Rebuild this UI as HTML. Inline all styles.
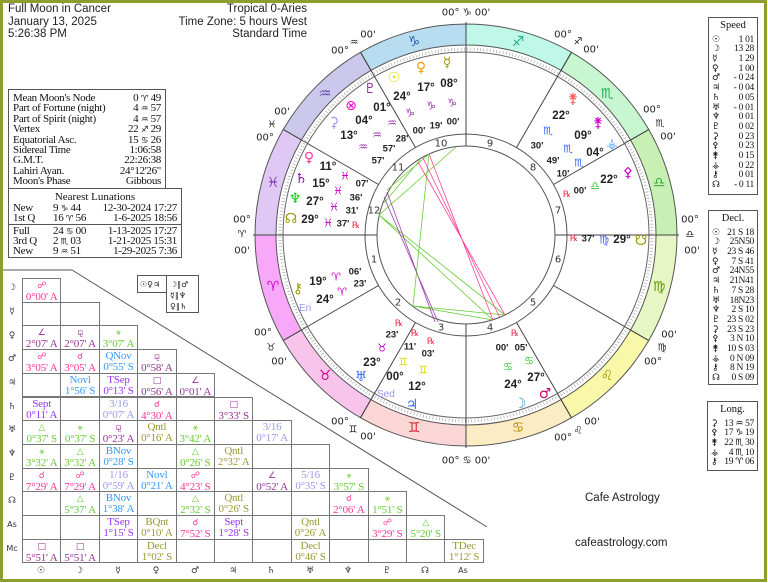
<!DOCTYPE html>
<html><head><meta charset="utf-8"><style>
*{margin:0;padding:0;box-sizing:border-box}
body{width:768px;height:583px;position:relative;background:#fff;font-family:"Liberation Sans","DejaVu Sans",sans-serif;overflow:hidden}
.frame{position:absolute;left:0;top:0;width:767px;height:582px;border:3px solid #8e9c30}
.t{position:absolute;font-size:11.5px;line-height:12.5px;color:#222;white-space:nowrap}
.box{position:absolute;border:1px solid #555;background:#fff;font-family:"Liberation Serif","DejaVu Serif",serif;font-size:11px;line-height:10px;color:#111;overflow:hidden}
.row{display:flex;justify-content:space-between;letter-spacing:-0.3px;white-space:nowrap;height:10.4px;overflow:visible}
.lun .row{height:9.9px}
.z{font-family:"DejaVu Sans",sans-serif;font-size:8.5px;color:#111;line-height:1}
.sbox{position:absolute;border:1px solid #555;font-family:"Liberation Serif","DejaVu Serif",serif;font-size:9.5px;line-height:9.7px;color:#111;padding:3px 3px;white-space:nowrap;letter-spacing:-0.3px}
.sbox .h{text-align:center;margin-bottom:5px;font-size:10.5px;letter-spacing:0}
.sbox .r{display:flex;justify-content:space-between;height:9.7px}
.sbox .r span:first-child{font-family:"DejaVu Sans",sans-serif;font-size:9px;line-height:1}
.cell{position:absolute;width:39.4px;height:24.7px;border:1px solid #777;font-family:"Liberation Serif","DejaVu Serif",serif;font-size:11px;line-height:11px;text-align:center;padding-top:1px;white-space:nowrap;letter-spacing:-0.2px}
.cell i{font-style:normal;font-family:"DejaVu Sans",sans-serif;font-size:9px}
.p{color:#ff3399}.u{color:#993399}.g{color:#66cc33}.b{color:#3399ff}.v{color:#9933ff}.l{color:#9999ee}.o{color:#999933}
.lab{position:absolute;font-family:"DejaVu Sans",sans-serif;font-size:9px;color:#333;width:16px;text-align:center}
</style></head><body>
<div class="frame"></div>
<div class="t" style="left:8px;top:3px">Full Moon in Cancer<br>January 13, 2025<br>5:26:38 PM</div>
<div class="t" style="left:150px;top:3px;width:157px;text-align:right">Tropical 0-Aries<br>Time Zone: 5 hours West<br>Standard Time</div>

<div class="box" style="left:8px;top:89px;width:158px;height:100px;padding:3px 4px 0 4px">
<div class="row"><span>Mean Moon's Node</span><span>0 <span class="z">♈︎</span> 49</span></div>
<div class="row"><span>Part of Fortune (night)</span><span>4 <span class="z">♒︎</span> 57</span></div>
<div class="row"><span>Part of Spirit (night)</span><span>4 <span class="z">♒︎</span> 57</span></div>
<div class="row"><span>Vertex</span><span>22 <span class="z">♐︎</span> 29</span></div>
<div class="row"><span>Equatorial Asc.</span><span>15 <span class="z">♋︎</span> 26</span></div>
<div class="row"><span>Sidereal Time</span><span>1:06:58</span></div>
<div class="row"><span>G.M.T.</span><span>22:26:38</span></div>
<div class="row"><span>Lahiri Ayan.</span><span>24°12'26"</span></div>
<div class="row"><span>Moon's Phase</span><span>Gibbous</span></div>
</div>
<div class="box lun" style="left:8px;top:188px;width:174px;height:70px;padding:3px 4px 0 4px">
<div style="text-align:center;height:11px">Nearest Lunations</div>
<div class="row"><span style="width:40px">New</span><span style="width:40px">9 <span class="z">♑︎</span> 44</span><span style="flex:1;text-align:right">12-30-2024 17:27</span></div>
<div class="row"><span style="width:40px">1st Q</span><span style="width:40px">16 <span class="z">♈︎</span> 56</span><span style="flex:1;text-align:right">1-6-2025 18:56</span></div>
<div style="border-top:1px solid #555;margin:1px -4px 1px -4px;height:0"></div>
<div class="row"><span style="width:40px">Full</span><span style="width:40px">24 <span class="z">♋︎</span> 00</span><span style="flex:1;text-align:right">1-13-2025 17:27</span></div>
<div class="row"><span style="width:40px">3rd Q</span><span style="width:40px">2 <span class="z">♏︎</span> 03</span><span style="flex:1;text-align:right">1-21-2025 15:31</span></div>
<div class="row"><span style="width:40px">New</span><span style="width:40px">9 <span class="z">♒︎</span> 51</span><span style="flex:1;text-align:right">1-29-2025 7:36</span></div>
</div>

<div class="sbox" style="left:708px;top:17px;width:50px;height:178px">
<div class="h">Speed</div>
<div class="r"><span>☉</span><span>1 01</span></div><div class="r"><span>☽</span><span>13 28</span></div><div class="r"><span>☿</span><span>1 29</span></div><div class="r"><span>♀</span><span>1 00</span></div><div class="r"><span>♂</span><span>- 0 24</span></div><div class="r"><span>♃</span><span>- 0 04</span></div><div class="r"><span>♄</span><span>0 05</span></div><div class="r"><span>♅</span><span>- 0 01</span></div><div class="r"><span>♆</span><span>0 01</span></div><div class="r"><span>♇</span><span>0 02</span></div><div class="r"><span>⚳</span><span>0 23</span></div><div class="r"><span>⚴</span><span>0 23</span></div><div class="r"><span>⚵</span><span>0 15</span></div><div class="r"><span>⚶</span><span>0 22</span></div><div class="r"><span>⚷</span><span>0 01</span></div><div class="r"><span>☊</span><span>- 0 11</span></div>
</div>
<div class="sbox" style="left:708px;top:210px;width:50px;height:175px">
<div class="h">Decl.</div>
<div class="r"><span>☉</span><span>21 S 18</span></div><div class="r"><span>☽</span><span>25N50</span></div><div class="r"><span>☿</span><span>23 S 46</span></div><div class="r"><span>♀</span><span>7 S 41</span></div><div class="r"><span>♂</span><span>24N55</span></div><div class="r"><span>♃</span><span>21N41</span></div><div class="r"><span>♄</span><span>7 S 28</span></div><div class="r"><span>♅</span><span>18N23</span></div><div class="r"><span>♆</span><span>2 S 10</span></div><div class="r"><span>♇</span><span>23 S 02</span></div><div class="r"><span>⚳</span><span>23 S 23</span></div><div class="r"><span>⚴</span><span>3 N 10</span></div><div class="r"><span>⚵</span><span>10 S 03</span></div><div class="r"><span>⚶</span><span>0 N 09</span></div><div class="r"><span>⚷</span><span>8 N 19</span></div><div class="r"><span>☊</span><span>0 S 09</span></div>
</div>
<div class="sbox" style="left:707px;top:401px;width:51px;height:70px">
<div class="h">Long.</div>
<div class="r"><span>⚳</span><span>13 <span class="z">♒︎</span> 57</span></div><div class="r"><span>⚴</span><span>17 <span class="z">♑︎</span> 19</span></div><div class="r"><span>⚵</span><span>22 <span class="z">♏︎</span> 30</span></div><div class="r"><span>⚶</span><span>4 <span class="z">♏︎</span> 10</span></div><div class="r"><span>⚷</span><span>19 <span class="z">♈︎</span> 06</span></div>
</div>

<div class="t" style="left:585px;top:492px">Cafe Astrology</div>
<div class="t" style="left:575px;top:537px">cafeastrology.com</div>

<svg width="768" height="583" style="position:absolute;left:0;top:0" font-family="DejaVu Sans, sans-serif">
<line x1="3" y1="270" x2="72" y2="270" stroke="#555"/>
<line x1="72" y1="270" x2="487" y2="527" stroke="#555"/>
<g stroke="#555" stroke-width="1">
<path d="M255,235 A211,211 0 0 0 283.27,340.5 L301.46,330 A190,190 0 0 1 276,235 Z" fill="#f8a8f8"/>
<path d="M255,235 A211,211 0 0 0 283.27,340.5 L301.46,330 A190,190 0 0 1 276,235 Z" fill="#f8c4ec" transform="rotate(-30 466 235)"/>
<path d="M255,235 A211,211 0 0 0 283.27,340.5 L301.46,330 A190,190 0 0 1 276,235 Z" fill="#fbd6d6" transform="rotate(-60 466 235)"/>
<path d="M255,235 A211,211 0 0 0 283.27,340.5 L301.46,330 A190,190 0 0 1 276,235 Z" fill="#fcecc4" transform="rotate(-90 466 235)"/>
<path d="M255,235 A211,211 0 0 0 283.27,340.5 L301.46,330 A190,190 0 0 1 276,235 Z" fill="#f8f8a8" transform="rotate(-120 466 235)"/>
<path d="M255,235 A211,211 0 0 0 283.27,340.5 L301.46,330 A190,190 0 0 1 276,235 Z" fill="#e6f6c4" transform="rotate(-150 466 235)"/>
<path d="M255,235 A211,211 0 0 0 283.27,340.5 L301.46,330 A190,190 0 0 1 276,235 Z" fill="#c8f0b4" transform="rotate(-180 466 235)"/>
<path d="M255,235 A211,211 0 0 0 283.27,340.5 L301.46,330 A190,190 0 0 1 276,235 Z" fill="#c8f6d0" transform="rotate(-210 466 235)"/>
<path d="M255,235 A211,211 0 0 0 283.27,340.5 L301.46,330 A190,190 0 0 1 276,235 Z" fill="#c0f8e8" transform="rotate(-240 466 235)"/>
<path d="M255,235 A211,211 0 0 0 283.27,340.5 L301.46,330 A190,190 0 0 1 276,235 Z" fill="#b8dcf0" transform="rotate(-270 466 235)"/>
<path d="M255,235 A211,211 0 0 0 283.27,340.5 L301.46,330 A190,190 0 0 1 276,235 Z" fill="#ccc8ec" transform="rotate(-300 466 235)"/>
<path d="M255,235 A211,211 0 0 0 283.27,340.5 L301.46,330 A190,190 0 0 1 276,235 Z" fill="#e0c8f4" transform="rotate(-330 466 235)"/>
</g>
<circle cx="466" cy="235" r="183" fill="none" stroke="#666"/>
<circle cx="466" cy="235" r="186" fill="none" stroke="#888" stroke-width="3" stroke-dasharray="0.5 2.75"/>
<circle cx="466" cy="235" r="101" fill="none" stroke="#555"/>
<circle cx="466" cy="235" r="89" fill="none" stroke="#555"/>
<g stroke="#444">
<line x1="377" y1="235" x2="253" y2="235"/><line x1="555" y1="235" x2="679" y2="235"/>
<line x1="466" y1="146" x2="466" y2="22"/><line x1="466" y1="324" x2="466" y2="448"/>
<line x1="378.5" y1="285.5" x2="283.3" y2="340.5"/><line x1="415.5" y1="322.5" x2="360.5" y2="417.7"/>
<line x1="516.5" y1="322.5" x2="571.5" y2="417.7"/><line x1="553.5" y1="285.5" x2="648.7" y2="340.5"/>
<line x1="553.5" y1="184.5" x2="648.7" y2="129.5"/><line x1="516.5" y1="147.5" x2="571.5" y2="52.3"/>
<line x1="415.5" y1="147.5" x2="360.5" y2="52.3"/><line x1="378.5" y1="184.5" x2="283.3" y2="129.5"/>
</g>
<g font-size="14" text-anchor="middle" dominant-baseline="central">
<text x="273" y="287" fill="#cc00cc">♈︎</text><text x="325" y="376" fill="#cc0088">♉︎</text><text x="414" y="428" fill="#cc2222">♊︎</text>
<text x="518" y="428" fill="#bb8800">♋︎</text><text x="607" y="376" fill="#999900">♌︎</text><text x="659" y="287" fill="#669900">♍︎</text>
<text x="659" y="183" fill="#33aa33">♎︎</text><text x="607" y="94" fill="#22aa55">♏︎</text><text x="518" y="42" fill="#22aa88">♐︎</text>
<text x="414" y="42" fill="#2266aa">♑︎</text><text x="325" y="94" fill="#6644aa">♒︎</text><text x="273" y="183" fill="#8833cc">♓︎</text>
</g>
<g font-size="10" fill="#222" text-anchor="middle" dominant-baseline="central">
<text x="466" y="13">00° ♑︎ 00'</text><text x="466" y="461">00° ♋︎ 00'</text>
<text x="242" y="220">00°</text><text x="242" y="235">♈︎</text><text x="242" y="251">00'</text>
<text x="690" y="220">00°</text><text x="690" y="235">♎︎</text><text x="692" y="251">00'</text>
<text x="282" y="112">00'</text><text x="272" y="125">♓︎</text><text x="265" y="138">00°</text>
<text x="340" y="51">00°</text><text x="354" y="43">♒︎</text><text x="368" y="35">00'</text>
<text x="563" y="35">00°</text><text x="578" y="42">♐︎</text><text x="591" y="50">00'</text>
<text x="652" y="110">00°</text><text x="660" y="124">♏︎</text><text x="668" y="137">00'</text>
<text x="669" y="335">00'</text><text x="662" y="348">♍︎</text><text x="653" y="362">00°</text>
<text x="592" y="422">00'</text><text x="578" y="431">♌︎</text><text x="563" y="438">00°</text>
<text x="368" y="437">00'</text><text x="353" y="430">♊︎</text><text x="340" y="422">00°</text>
<text x="263" y="333">00°</text><text x="271" y="348">♉︎</text><text x="279" y="362">00'</text>
</g>
<g font-size="10" fill="#333" text-anchor="middle" dominant-baseline="central">
<text x="441" y="144">10</text><text x="490" y="144">9</text><text x="533" y="168">8</text><text x="558" y="211">7</text>
<text x="558" y="260">6</text><text x="533" y="303">5</text><text x="490" y="328">4</text><text x="441" y="328">3</text>
<text x="398" y="303">2</text><text x="374" y="260">1</text><text x="374" y="211">12</text><text x="398" y="168">11</text>
</g>
<g fill="none" stroke-width="0.8">
<g stroke="#66cc33">
<path d="M456,147 L379,215 L505,315 M379,215 L493,320 M429,154 L413,306 L493,320 M413,306 L505,315 M429,154 L387,190 M420,160 L384,203"/>
</g>
<g stroke="#ff4499">
<path d="M418,162 L505,315 M429,154 L493,320 M423,158 L500,318"/>
</g>
<g stroke="#9944aa">
<path d="M384,197 L438,322 M387,192 L435,322"/>
</g>
</g>
<g font-size="14" text-anchor="middle" dominant-baseline="central">
<text x="394" y="78" fill="#e8d800">☉</text><text x="421" y="68" fill="#ff9900">♀</text><text x="447" y="63" fill="#999900">☿</text>
<text x="370" y="89" fill="#993399">♇</text><text x="351" y="106" fill="#ff00cc">⊗</text><text x="334" y="123" fill="#9999ee">⚳</text>
<text x="309" y="158" fill="#ff3399">♀</text><text x="301" y="179" fill="#9900cc">♄</text><text x="295" y="199" fill="#00cc00">♆</text><text x="291" y="219" fill="#999900">☊</text>
<text x="298" y="289" fill="#999900">⚷</text><text x="361" y="377" fill="#3366ff">♅</text><text x="412" y="405" fill="#3366ff">♃</text>
<text x="520" y="404" fill="#3399bb">☽</text><text x="545" y="394" fill="#cc0066">♂</text>
<text x="641" y="241" fill="#999900">☋</text><text x="628" y="173" fill="#cc00cc">⚴</text>
<text x="573" y="99" fill="#ff5555">⚵</text><text x="598" y="123" fill="#cc00cc">⚵</text><text x="612" y="144" fill="#66aaff">⚶</text>
</g>
<g font-size="11" text-anchor="middle" dominant-baseline="central">
<g fill="#9933aa"><text x="410" y="113">♑︎</text><text x="431" y="106">♑︎</text><text x="452" y="103">♑︎</text><text x="392" y="123">♒︎</text><text x="377" y="135">♒︎</text><text x="363" y="147">♒︎</text></g>
<g fill="#cc00cc"><text x="345" y="176">♓︎</text><text x="338" y="191">♓︎</text><text x="334" y="207">♓︎</text><text x="328" y="223">♓︎</text><text x="336" y="277">♈︎</text><text x="342" y="292">♈︎</text><text x="382" y="348">♉︎</text></g>
<g fill="#dddd00"><text x="403" y="362">♊︎</text><text x="423" y="370">♊︎</text></g>
<g fill="#33cc33"><text x="508" y="367">♋︎</text><text x="529" y="361">♋︎</text><text x="595" y="186">♎︎</text></g>
<g fill="#3366ff"><text x="604" y="240">♍︎</text><text x="548" y="131">♏︎</text><text x="568" y="149">♏︎</text><text x="579" y="163">♏︎</text></g>
</g>
<g font-size="11.5" font-weight="bold" fill="#222" text-anchor="middle" dominant-baseline="central" font-family="Liberation Sans, sans-serif">
<text x="402" y="97">24°</text><text x="426" y="88">17°</text><text x="449" y="84">08°</text><text x="382" y="108">01°</text><text x="364" y="121">04°</text><text x="349" y="136">13°</text>
<text x="328" y="167">11°</text><text x="321" y="184">15°</text><text x="315" y="202">27°</text><text x="310" y="220">29°</text>
<text x="318" y="282">19°</text><text x="325" y="300">24°</text><text x="372" y="363">23°</text><text x="395" y="377">00°</text><text x="417" y="387">12°</text>
<text x="513" y="385">24°</text><text x="536" y="378">27°</text><text x="622" y="240">29°</text><text x="609" y="180">22°</text>
<text x="561" y="116">22°</text><text x="583" y="136">09°</text><text x="595" y="153">04°</text>
</g>
<g font-size="9.5" font-weight="bold" fill="#222" text-anchor="middle" dominant-baseline="central" font-family="Liberation Sans, sans-serif">
<text x="419" y="131">00'</text><text x="436" y="126">19'</text><text x="453" y="122">00'</text><text x="402" y="139">28'</text><text x="389" y="149">57'</text><text x="378" y="161">57'</text>
<text x="362" y="184">07'</text><text x="356" y="198">36'</text><text x="352" y="211">31'</text><text x="343" y="224">37'</text>
<text x="355" y="272">06'</text><text x="360" y="284">23'</text><text x="392" y="335">23'</text><text x="410" y="347">11'</text><text x="428" y="354">03'</text>
<text x="502" y="348">00'</text><text x="521" y="348">05'</text><text x="588" y="239">37'</text><text x="580" y="191">00'</text>
<text x="537" y="146">30'</text><text x="553" y="161">49'</text><text x="563" y="174">10'</text>
</g>
<g font-size="9" fill="#ee2244" text-anchor="middle" dominant-baseline="central">
<text x="356" y="226">℞</text><text x="399" y="324">℞</text><text x="415" y="334">℞</text><text x="431" y="342">℞</text><text x="515" y="334">℞</text><text x="574" y="239">℞</text><text x="567" y="195">℞</text>
</g>
<g font-size="10" fill="#9999ee" font-family="Liberation Sans, sans-serif"><text x="299" y="311">Eri</text><text x="377" y="397">Sed</text></g>
<g font-size="8" fill="#222"><rect x="137.5" y="275.5" width="30" height="17" fill="none" stroke="#555"/><rect x="166.5" y="275.5" width="32" height="37" fill="#fff" stroke="#555"/>
<text x="140" y="287">☉♀♃</text><text x="170" y="287">☽∥♂</text><text x="170" y="298">☿∥♆</text><text x="170" y="309">♀∥♄</text></g>
</svg>

<div class="lab" style="left:4px;top:283px">☽</div><div class="lab" style="left:4px;top:307px">☿</div><div class="lab" style="left:4px;top:331px">♀</div><div class="lab" style="left:4px;top:354px">♂</div><div class="lab" style="left:4px;top:378px">♃</div><div class="lab" style="left:4px;top:402px">♄</div><div class="lab" style="left:4px;top:425px">♅</div><div class="lab" style="left:4px;top:449px">♆</div><div class="lab" style="left:4px;top:473px">♇</div><div class="lab" style="left:4px;top:496px">☊</div><div class="lab" style="left:4px;top:520px;font-size:8px">As</div><div class="lab" style="left:4px;top:544px;font-size:8px">Mc</div>
<div class="lab" style="left:33px;top:566px">☉</div><div class="lab" style="left:71px;top:566px">☽</div><div class="lab" style="left:110px;top:566px">☿</div><div class="lab" style="left:148px;top:566px">♀</div><div class="lab" style="left:187px;top:566px">♂</div><div class="lab" style="left:225px;top:566px">♃</div><div class="lab" style="left:263px;top:566px">♄</div><div class="lab" style="left:302px;top:566px">♅</div><div class="lab" style="left:340px;top:566px">♆</div><div class="lab" style="left:379px;top:566px">♇</div><div class="lab" style="left:417px;top:566px">☊</div><div class="lab" style="left:455px;top:566px;font-size:8px">As</div>

<div class="cell p" style="left:22px;top:278px"><i>☍</i><br>0°00' A</div>
<div class="cell" style="left:22px;top:301.7px"></div><div class="cell" style="left:60.4px;top:301.7px"></div>
<div class="cell u" style="left:22px;top:325.4px"><i>∠</i><br>2°07' A</div><div class="cell u" style="left:60.4px;top:325.4px"><i>⚼</i><br>2°07' A</div><div class="cell g" style="left:98.8px;top:325.4px"><i>⚹</i><br>3°07' A</div>
<div class="cell p" style="left:22px;top:349.1px"><i>☍</i><br>3°05' A</div><div class="cell p" style="left:60.4px;top:349.1px"><i>☌</i><br>3°05' A</div><div class="cell b" style="left:98.8px;top:349.1px">QNov<br>0°55' S</div><div class="cell u" style="left:137.2px;top:349.1px"><i>⚼</i><br>0°58' A</div>
<div class="cell" style="left:22px;top:372.8px"></div><div class="cell b" style="left:60.4px;top:372.8px">Novl<br>1°56' S</div><div class="cell v" style="left:98.8px;top:372.8px">TSep<br>0°13' S</div><div class="cell u" style="left:137.2px;top:372.8px"><i>□</i><br>0°56' A</div><div class="cell u" style="left:175.6px;top:372.8px"><i>∠</i><br>0°01' A</div>
<div class="cell v" style="left:22px;top:396.5px">Sept<br>0°11' A</div><div class="cell" style="left:60.4px;top:396.5px"></div><div class="cell l" style="left:98.8px;top:396.5px">3/16<br>0°07' A</div><div class="cell p" style="left:137.2px;top:396.5px"><i>☌</i><br>4°30' A</div><div class="cell" style="left:175.6px;top:396.5px"></div><div class="cell u" style="left:214px;top:396.5px"><i>□</i><br>3°33' S</div>
<div class="cell g" style="left:22px;top:420.2px"><i>△</i><br>0°37' S</div><div class="cell g" style="left:60.4px;top:420.2px"><i>⚹</i><br>0°37' S</div><div class="cell u" style="left:98.8px;top:420.2px"><i>⚼</i><br>0°23' A</div><div class="cell o" style="left:137.2px;top:420.2px">Qntl<br>0°16' A</div><div class="cell g" style="left:175.6px;top:420.2px"><i>⚹</i><br>3°42' A</div><div class="cell" style="left:214px;top:420.2px"></div><div class="cell l" style="left:252.4px;top:420.2px">3/16<br>0°17' A</div>
<div class="cell g" style="left:22px;top:443.9px"><i>⚹</i><br>3°32' A</div><div class="cell g" style="left:60.4px;top:443.9px"><i>△</i><br>3°32' A</div><div class="cell b" style="left:98.8px;top:443.9px">BNov<br>0°28' S</div><div class="cell" style="left:137.2px;top:443.9px"></div><div class="cell g" style="left:175.6px;top:443.9px"><i>△</i><br>0°26' S</div><div class="cell o" style="left:214px;top:443.9px">Qntl<br>2°32' A</div><div class="cell" style="left:252.4px;top:443.9px"></div><div class="cell" style="left:290.8px;top:443.9px"></div>
<div class="cell p" style="left:22px;top:467.6px"><i>☌</i><br>7°29' A</div><div class="cell p" style="left:60.4px;top:467.6px"><i>☍</i><br>7°29' A</div><div class="cell l" style="left:98.8px;top:467.6px">1/16<br>0°59' A</div><div class="cell b" style="left:137.2px;top:467.6px">Novl<br>0°21' A</div><div class="cell p" style="left:175.6px;top:467.6px"><i>☍</i><br>4°23' S</div><div class="cell" style="left:214px;top:467.6px"></div><div class="cell u" style="left:252.4px;top:467.6px"><i>∠</i><br>0°52' A</div><div class="cell l" style="left:290.8px;top:467.6px">5/16<br>0°35' S</div><div class="cell g" style="left:329.2px;top:467.6px"><i>⚹</i><br>3°57' S</div>
<div class="cell" style="left:22px;top:491.3px"></div><div class="cell g" style="left:60.4px;top:491.3px"><i>△</i><br>5°37' A</div><div class="cell b" style="left:98.8px;top:491.3px">BNov<br>1°38' A</div><div class="cell" style="left:137.2px;top:491.3px"></div><div class="cell g" style="left:175.6px;top:491.3px"><i>△</i><br>2°32' S</div><div class="cell o" style="left:214px;top:491.3px">Qntl<br>0°26' S</div><div class="cell" style="left:252.4px;top:491.3px"></div><div class="cell" style="left:290.8px;top:491.3px"></div><div class="cell p" style="left:329.2px;top:491.3px"><i>☌</i><br>2°06' A</div><div class="cell g" style="left:367.6px;top:491.3px"><i>⚹</i><br>1°51' S</div>
<div class="cell" style="left:22px;top:515px"></div><div class="cell" style="left:60.4px;top:515px"></div><div class="cell v" style="left:98.8px;top:515px">TSep<br>1°15' S</div><div class="cell o" style="left:137.2px;top:515px">BQnt<br>0°10' A</div><div class="cell p" style="left:175.6px;top:515px"><i>☌</i><br>7°52' S</div><div class="cell v" style="left:214px;top:515px">Sept<br>1°28' S</div><div class="cell" style="left:252.4px;top:515px"></div><div class="cell o" style="left:290.8px;top:515px">Qntl<br>0°26' A</div><div class="cell" style="left:329.2px;top:515px"></div><div class="cell p" style="left:367.6px;top:515px"><i>☍</i><br>3°29' S</div><div class="cell g" style="left:406px;top:515px"><i>△</i><br>5°20' S</div>
<div class="cell u" style="left:22px;top:538.7px"><i>□</i><br>5°51' A</div><div class="cell u" style="left:60.4px;top:538.7px"><i>□</i><br>5°51' A</div><div class="cell" style="left:98.8px;top:538.7px"></div><div class="cell o" style="left:137.2px;top:538.7px">Decl<br>1°02' S</div><div class="cell" style="left:175.6px;top:538.7px"></div><div class="cell" style="left:214px;top:538.7px"></div><div class="cell" style="left:252.4px;top:538.7px"></div><div class="cell o" style="left:290.8px;top:538.7px">Decl<br>0°46' S</div><div class="cell" style="left:329.2px;top:538.7px"></div><div class="cell" style="left:367.6px;top:538.7px"></div><div class="cell" style="left:406px;top:538.7px"></div><div class="cell o" style="left:444.4px;top:538.7px">TDec<br>1°12' S</div>
</body></html>
